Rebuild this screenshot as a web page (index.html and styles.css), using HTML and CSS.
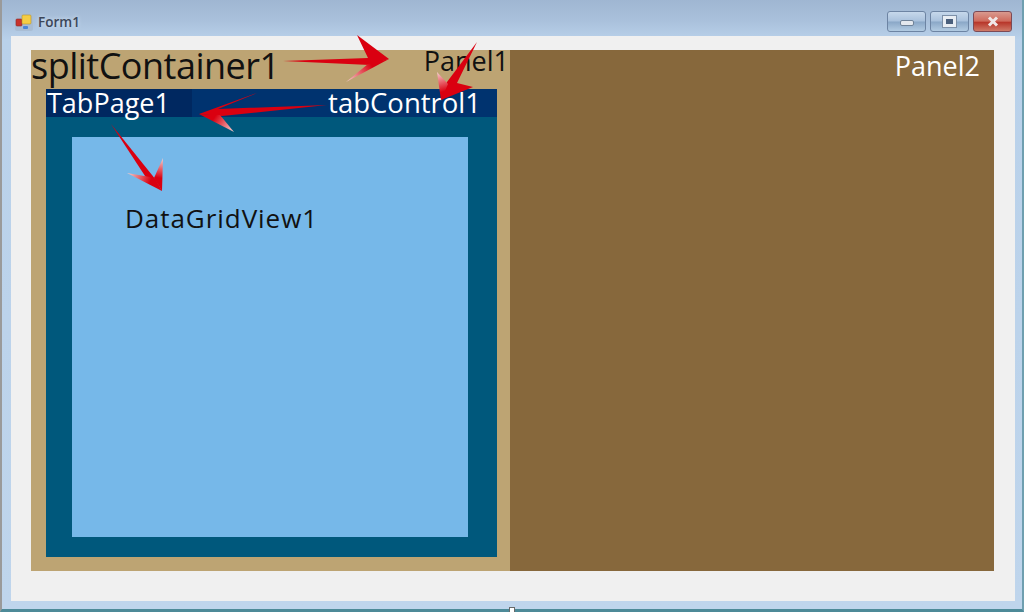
FILE: index.html
```html
<!DOCTYPE html>
<html lang="en">
<head>
    <meta charset="UTF-8">
    <title>Form1</title>
    <link rel="stylesheet" href="styles.css">
</head>
<body>
    <div class="window">
        <div class="titlebar">
            <svg class="form-icon" width="18" height="18" viewBox="0 0 18 18">
                <rect x="0" y="0" width="18" height="18" rx="2" fill="#a9bdd4"/>
                <rect x="1" y="6" width="6" height="7" rx="1" fill="#c8322c" stroke="#8c2a2a" stroke-width="0.6"/>
                <rect x="7" y="2" width="9" height="9" rx="1" fill="#f5cd45" stroke="#b8962e" stroke-width="0.6"/>
                <rect x="8" y="13" width="5" height="3" rx="1" fill="#4b86d8"/>
            </svg>
            <span class="title">Form1</span>
            <div class="controls">
                <div class="btn btn-min"><span class="glyph-min"></span></div>
                <div class="btn btn-max"><span class="glyph-max"></span></div>
                <div class="btn btn-close">
                    <svg width="14" height="11" viewBox="0 0 14 11"><path d="M3 1.5 L11 9.5 M11 1.5 L3 9.5" stroke="#f0e8e8" stroke-width="3"/></svg>
                </div>
            </div>
        </div>
        <div class="client">
            <div class="split">
                <div class="panel1">
                    <div class="panel1-head">
                        <span class="split-label">splitContainer1</span>
                        <span class="panel1-label">Panel1</span>
                    </div>
                    <div class="tabcontrol">
                        <div class="tabstrip">
                            <div class="tabpage-tab">TabPage1</div>
                            <div class="tabcontrol-label">tabControl1</div>
                        </div>
                        <div class="tabpage">
                            <div class="grid">DataGridView1</div>
                        </div>
                    </div>
                </div>
                <div class="panel2">Panel2</div>
            </div>
        </div>
    </div>
    <div class="resize-handle"></div>

    <!-- red callout arrows drawn on top of the screenshot -->
    <svg class="arrows" width="1024" height="612" viewBox="0 0 1024 612">
        <defs>
            <linearGradient id="barb1" gradientUnits="userSpaceOnUse" x1="372" y1="66" x2="346" y2="82">
                <stop offset="0" stop-color="#da0010"/>
                <stop offset="1" stop-color="#f8d4d4"/>
            </linearGradient>
            <linearGradient id="barb2" gradientUnits="userSpaceOnUse" x1="442" y1="92" x2="437" y2="72">
                <stop offset="0" stop-color="#da0010"/>
                <stop offset="1" stop-color="#f8d4d4"/>
            </linearGradient>
            <linearGradient id="barb3" gradientUnits="userSpaceOnUse" x1="214" y1="118" x2="234" y2="132">
                <stop offset="0" stop-color="#da0010"/>
                <stop offset="1" stop-color="#f8d4d4"/>
            </linearGradient>
            <linearGradient id="barb4" gradientUnits="userSpaceOnUse" x1="150" y1="182" x2="127" y2="173">
                <stop offset="0" stop-color="#da0010"/>
                <stop offset="1" stop-color="#f8d4d4"/>
            </linearGradient>
            <linearGradient id="barb5" gradientUnits="userSpaceOnUse" x1="160" y1="178" x2="163" y2="158">
                <stop offset="0" stop-color="#da0010"/>
                <stop offset="1" stop-color="#f8d4d4"/>
            </linearGradient>
        </defs>
        <g fill="#da0010">
            <path d="M283 61 L368 58 L357 35 L389 59 L370 65 Z"/>
            <path d="M389 59 L346 82 L368 64 Z" fill="url(#barb1)"/>
            <path d="M477 42 L457 83 L473 87 L441 100 L447 82 Z"/>
            <path d="M441 100 L437 72 L448 84 Z" fill="url(#barb2)"/>
            <path d="M327 105 L218 109 L257 93 L199 114 L222 116 Z"/>
            <path d="M199 114 L234 132 L220 115 Z" fill="url(#barb3)"/>
            <path d="M111 124 L156 180 L162 191 L147 179 Z"/>
            <path d="M162 191 L127 173 L150 177 Z" fill="url(#barb4)"/>
            <path d="M162 191 L163 158 L154 178 Z" fill="url(#barb5)"/>
        </g>
    </svg>
</body>
</html>
```

FILE: styles.css
```css
html, body {
    margin: 0;
    height: 100%;
    overflow: hidden;
}

body {
    font-family: "Open Sans", "Noto Sans", sans-serif;
    position: relative;
}

.window {
    width: 1024px;
    height: 612px;
    box-sizing: border-box;
    display: flex;
    flex-direction: column;
    background: linear-gradient(to bottom, #9fb6d2 0, #a9c0db 20px, #b9d1ea 40px, #bfd5ec 100%);
    border-left: 2px solid #9a9a9a;
    border-right: 2px solid #6f9fb0;
    border-bottom: 3px solid #4d8a98;
}

.titlebar {
    height: 36px;
    flex: none;
    display: flex;
    align-items: flex-start;
    padding-left: 13px;
    padding-right: 10px;
}

.form-icon {
    margin-top: 13px;
}

.title {
    margin-top: 13px;
    margin-left: 5px;
    font-size: 13.5px;
    font-weight: 600;
    color: #3c4658;
    text-shadow: 0 0 4px #d8e6f4;
}

.controls {
    margin-left: auto;
    margin-top: 11px;
    display: flex;
    gap: 4px;
}

.btn {
    width: 37px;
    height: 19px;
    border: 1px solid #6d84a3;
    border-radius: 3px;
    display: flex;
    align-items: center;
    justify-content: center;
    background: linear-gradient(to bottom, #c6d8eb 0, #a9c1dc 48%, #8aa7c7 52%, #b2cbe2 100%);
}

.btn-close {
    background: linear-gradient(to bottom, #d99a8f 0, #cf6a5c 48%, #b8362a 54%, #cf7a68 100%);
    border-color: #7c4a55;
}

.glyph-min {
    width: 14px;
    height: 6px;
    margin-top: 3px;
    border-radius: 2px;
    background: #e4e8ee;
    border: 1px solid #6f8298;
    box-sizing: border-box;
}

.glyph-max {
    width: 13px;
    height: 11px;
    box-sizing: border-box;
    border: 3px solid #e8edf3;
    outline: 1px solid #7d90a8;
    background: #4a5f7c;
}

.client {
    flex: 1;
    margin: 0 7px 8px 9px;
    padding: 14px 21px 30px 20px;
    background: #f0f0f0;
    display: flex;
}

.split {
    flex: 1;
    display: flex;
    background: #bda473;
}

.panel1 {
    width: 478px;
    flex: none;
    padding: 0 12px 14px 15px;
    box-sizing: border-box;
    display: flex;
    flex-direction: column;
}

.panel1-head {
    height: 39px;
    flex: none;
    margin-left: -15px;
    margin-right: -12px;
    display: flex;
    justify-content: space-between;
    color: #111;
}

.split-label {
    font-size: 36px;
    line-height: 32px;
    letter-spacing: -0.5px;
}

.panel1-label {
    font-size: 27px;
    line-height: 22px;
}

.tabcontrol {
    flex: 1;
    display: flex;
    flex-direction: column;
    background: #00587c;
}

.tabstrip {
    height: 28px;
    flex: none;
    display: flex;
    justify-content: space-between;
    background: #00336f;
    color: #fff;
    font-size: 27px;
    line-height: 28px;
}

.tabpage-tab {
    width: 146px;
    box-sizing: border-box;
    padding-left: 1px;
    background: #002860;
}

.tabcontrol-label {
    padding-right: 16px;
    font-size: 27.5px;
}

.tabpage {
    flex: 1;
    padding: 20px 29px 20px 26px;
    display: flex;
}

.grid {
    flex: 1;
    background: #76b8e9;
    color: #111;
    font-size: 26px;
    letter-spacing: 0.95px;
    line-height: 30px;
    padding: 66px 0 0 53px;
}

.panel2 {
    flex: 1;
    margin-left: 1px;
    background: #87683c;
    color: #fff;
    font-size: 27px;
    line-height: 32px;
    text-align: right;
    padding-right: 14px;
}

.resize-handle {
    position: absolute;
    left: 509px;
    top: 607px;
    width: 6px;
    height: 5px;
    box-sizing: border-box;
    background: #fff;
    border: 1px solid #6a6a6a;
    border-bottom: none;
}

.arrows {
    position: absolute;
    left: 0;
    top: 0;
    pointer-events: none;
}
```
